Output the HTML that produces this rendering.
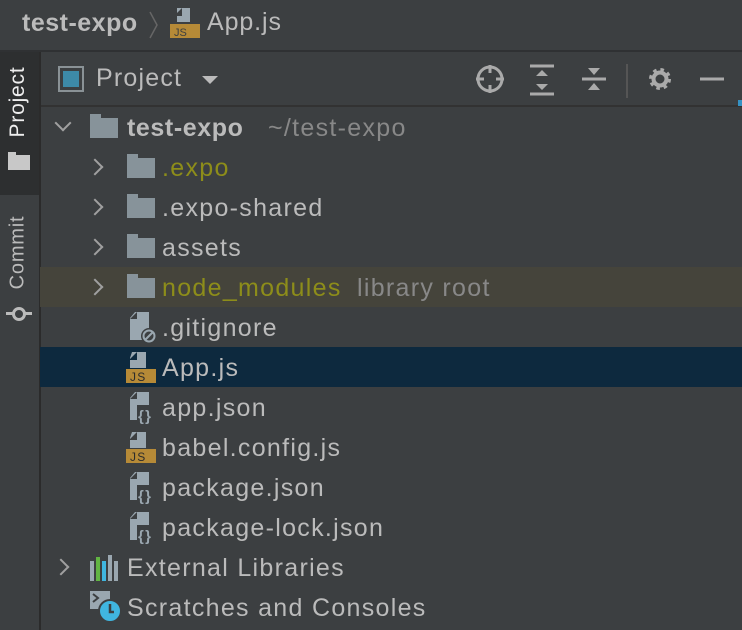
<!DOCTYPE html><html><head><style>
body{margin:0;width:742px;height:630px;background:#3c3f41;font-family:"Liberation Sans",sans-serif;color:#bbb;overflow:hidden;position:relative}
.a{position:absolute}
.row{position:absolute;left:40px;right:0;height:40px;font-size:25px;line-height:42px;letter-spacing:1.3px}
.row span{position:absolute;white-space:nowrap}
.chev{width:10px;height:10px;border-right:2.5px solid #a0a0a0;border-bottom:2.5px solid #a0a0a0;position:absolute}
.fold{position:absolute;width:28px;height:20px;background:#87939a;top:11px}
.fold:before{content:"";position:absolute;left:0;top:-4px;width:11px;height:5px;background:#87939a}
.file{position:absolute;top:5px}
</style></head><body>
<div class="a" style="left:0;top:0;width:742px;height:50px;background:#3c3f41;border-bottom:2px solid #2f3133"></div>
<div class="a" style="left:22px;top:9px;font-size:25px;font-weight:bold;color:#bbb;letter-spacing:0.5px">test-expo</div>
<svg class="a" style="left:148px;top:10px" width="12" height="30"><path d="M2 2 L9 15 L2 28" stroke="#666" fill="none" stroke-width="1.5"/></svg>
<svg class="a" style="left:170px;top:8px" width="32" height="30"><path d="M7 0h13v14H7z" fill="#9aa7b0"/><path d="M12 0v8H4z" fill="#3c3f41"/><rect x="0" y="16" width="30" height="14" fill="#b68a37"/><text x="4" y="28" font-size="11" fill="#3c3f41" font-family="Liberation Sans">JS</text></svg>
<div class="a" style="left:207px;top:8px;font-size:25px;color:#bbb;letter-spacing:0.9px">App.js</div>
<div class="a" style="left:0;top:52px;width:39px;height:578px;background:#3c3f41;border-right:2px solid #2b2b2b"></div>
<div class="a" style="left:0;top:52px;width:39px;height:143px;background:#2d2f30"></div>
<div class="a" style="left:-22px;top:90px;transform:rotate(-90deg);font-size:21px;color:#eee;width:80px;text-align:center;letter-spacing:0.8px">Project</div>
<div class="a" style="left:8px;top:155px;width:22px;height:15px;background:#c8c8c8"></div>
<div class="a" style="left:8px;top:152px;width:8px;height:4px;background:#c8c8c8"></div>
<div class="a" style="left:-22px;top:241px;transform:rotate(-90deg);font-size:20px;color:#bbb;width:80px;text-align:center;letter-spacing:0.8px">Commit</div>
<div class="a" style="left:6px;top:312px;width:26px;height:3px;background:#bbb"></div>
<div class="a" style="left:12px;top:307px;width:8px;height:8px;border:3px solid #bbb;border-radius:50%;background:#3c3f41"></div>
<div class="a" style="left:41px;top:52px;right:0;height:53px;border-bottom:2px solid #323232"></div>
<div class="a" style="left:58px;top:66px;width:26px;height:26px;border:2px solid #8a9296;box-sizing:border-box"><div style="margin:3px;height:16px;background:#3d8aa8"></div></div>
<div class="a" style="left:96px;top:64px;font-size:25px;letter-spacing:1.2px">Project</div>
<div class="a" style="left:202px;top:76px;border-left:8px solid transparent;border-right:8px solid transparent;border-top:8px solid #bbb"></div>
<svg class="a" style="left:474px;top:62px" width="260" height="36">
<circle cx="16" cy="17" r="12" stroke="#aaa" stroke-width="3" fill="none"/><path d="M16 3v8M16 23v8M2 17h8M22 17h8" stroke="#aaa" stroke-width="3"/>
<path d="M56 4h24M56 32h24" stroke="#aaa" stroke-width="3"/><path d="M68 8l6 6h-12zM68 28l6-6h-12z" fill="#aaa"/>
<path d="M108 17h24" stroke="#aaa" stroke-width="3"/><path d="M120 13l6-7h-12zM120 21l6 7h-12z" fill="#aaa"/>
<path d="M153 2v34" stroke="#555" stroke-width="2"/>
<circle cx="186" cy="17" r="8" stroke="#aaa" stroke-width="6" fill="none" stroke-dasharray="3 3.3"/><circle cx="186" cy="17" r="6.5" stroke="#aaa" stroke-width="4" fill="none"/>
<path d="M226 17h24" stroke="#aaa" stroke-width="3"/></svg>
<div class="a" style="left:738px;top:100px;width:4px;height:6px;background:#3592c4"></div>

<div class="row" style="top:107px"><div class="chev" style="left:17px;top:10px;transform:rotate(45deg)"></div><div class="fold" style="left:50px"></div><span style="left:87px;font-weight:bold;letter-spacing:0.6px">test-expo</span><span style="left:228px;color:#888">~/test-expo</span></div>
<div class="row" style="top:147px"><div class="chev" style="left:49px;top:14px;transform:rotate(-45deg)"></div><div class="fold" style="left:87px"></div><span style="left:122px;color:#8d8d1a">.expo</span></div>
<div class="row" style="top:187px"><div class="chev" style="left:49px;top:14px;transform:rotate(-45deg)"></div><div class="fold" style="left:87px"></div><span style="left:122px">.expo-shared</span></div>
<div class="row" style="top:227px"><div class="chev" style="left:49px;top:14px;transform:rotate(-45deg)"></div><div class="fold" style="left:87px"></div><span style="left:122px">assets</span></div>
<div class="row" style="top:267px;background:#45443b"><div class="chev" style="left:49px;top:14px;transform:rotate(-45deg)"></div><div class="fold" style="left:87px"></div><span style="left:122px;color:#8d8d1a">node_modules</span><span style="left:317px;color:#888">library root</span></div>
<div class="row" style="top:307px"><svg class="file" style="left:88px" width="28" height="32" viewBox="0 0 28 32"><path d="M7 0h14v28H2V6z" fill="#9aa7b0"/><path d="M9 0v7H2z" fill="#3c3f41"/><circle cx="21" cy="24" r="8" fill="#3c3f41"/><circle cx="21" cy="24" r="5.5" stroke="#9aa7b0" stroke-width="2" fill="none"/><path d="M17.5 27.5l7-7" stroke="#9aa7b0" stroke-width="2"/></svg><span style="left:122px">.gitignore</span></div>
<div class="row" style="top:347px;background:#0d293e"><svg class="file" style="left:85px" width="32" height="32" viewBox="0 0 32 32"><path d="M7 0h14v16H5V6z" fill="#9aa7b0"/><path d="M12 0v8H4z" fill="#0d293e"/><rect x="1" y="17" width="30" height="14" fill="#b68a37"/><text x="5" y="29" font-size="12" fill="#2b2b2b" font-family="Liberation Sans">JS</text></svg><span style="left:122px">App.js</span></div>
<div class="row" style="top:387px"><svg class="file" style="left:88px" width="28" height="32" viewBox="0 0 28 32"><path d="M7 0h14v28H2V6z" fill="#9aa7b0"/><path d="M9 0v7H2z" fill="#3c3f41"/><rect x="9" y="13" width="19" height="19" fill="#3c3f41"/><text x="10" y="29" font-size="15" font-weight="bold" fill="#9aa7b0" font-family="Liberation Sans">{}</text></svg><span style="left:122px">app.json</span></div>
<div class="row" style="top:427px"><svg class="file" style="left:85px" width="32" height="32" viewBox="0 0 32 32"><path d="M7 0h14v16H5V6z" fill="#9aa7b0"/><path d="M12 0v8H4z" fill="#3c3f41"/><rect x="1" y="17" width="30" height="14" fill="#b68a37"/><text x="5" y="29" font-size="12" fill="#2b2b2b" font-family="Liberation Sans">JS</text></svg><span style="left:122px">babel.config.js</span></div>
<div class="row" style="top:467px"><svg class="file" style="left:88px" width="28" height="32" viewBox="0 0 28 32"><path d="M7 0h14v28H2V6z" fill="#9aa7b0"/><path d="M9 0v7H2z" fill="#3c3f41"/><rect x="9" y="13" width="19" height="19" fill="#3c3f41"/><text x="10" y="29" font-size="15" font-weight="bold" fill="#9aa7b0" font-family="Liberation Sans">{}</text></svg><span style="left:122px">package.json</span></div>
<div class="row" style="top:507px"><svg class="file" style="left:88px" width="28" height="32" viewBox="0 0 28 32"><path d="M7 0h14v28H2V6z" fill="#9aa7b0"/><path d="M9 0v7H2z" fill="#3c3f41"/><rect x="9" y="13" width="19" height="19" fill="#3c3f41"/><text x="10" y="29" font-size="15" font-weight="bold" fill="#9aa7b0" font-family="Liberation Sans">{}</text></svg><span style="left:122px">package-lock.json</span></div>
<div class="row" style="top:547px"><div class="chev" style="left:15px;top:14px;transform:rotate(-45deg)"></div><svg class="a" style="left:50px;top:8px" width="30" height="26"><rect x="0" y="6" width="4" height="20" fill="#9aa7b0"/><rect x="6" y="2" width="4" height="24" fill="#62b543"/><rect x="12" y="6" width="4" height="20" fill="#40b6e0"/><rect x="18" y="0" width="4" height="26" fill="#9aa7b0"/><rect x="24" y="6" width="4" height="20" fill="#9aa7b0"/></svg><span style="left:87px">External Libraries</span></div>
<div class="row" style="top:587px"><svg class="a" style="left:50px;top:4px" width="32" height="32"><rect x="0" y="0" width="20" height="18" fill="#9aa7b0"/><path d="M3 3l5 4-5 4" stroke="#3c3f41" stroke-width="2" fill="none"/><circle cx="20" cy="20" r="11" fill="#40b6e0" stroke="#3c3f41" stroke-width="2"/><path d="M20 13v8h4" stroke="#3c3f41" stroke-width="2.5" fill="none"/></svg><span style="left:87px">Scratches and Consoles</span></div>
</body></html>
